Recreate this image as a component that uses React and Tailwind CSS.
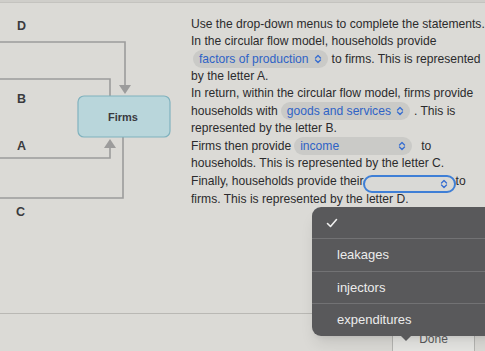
import React from 'react';

const Chevrons = ({ className = '' }) => (
  <svg width="8" height="10" viewBox="0 0 8 10" className={className} fill="none">
    <path d="M1.5 4 L4 1.5 L6.5 4" stroke="currentColor" strokeWidth="1.4" strokeLinecap="round" strokeLinejoin="round" />
    <path d="M1.5 6 L4 8.5 L6.5 6" stroke="currentColor" strokeWidth="1.4" strokeLinecap="round" strokeLinejoin="round" />
  </svg>
);

const Pill = ({ label, width = '', focused }) => (
  <span
    className={`inline-flex h-[18px] items-center justify-between gap-[5px] rounded-[9px] pl-[6px] pr-[6px] text-[#2f63c6] ${
      focused ? 'border-2 border-[#3f7fd6] bg-[#d9d9d6]' : 'bg-[#cacac7]'
    } ${width}`}
  >
    <span>{label}</span>
    <Chevrons className="text-[#3a6fd0]" />
  </span>
);

const Diagram = () => (
  <svg width="180" height="220" viewBox="0 0 180 220" className="shrink-0">
    <g stroke="#9c9c9c" strokeWidth="1.6" fill="none">
      <polyline points="0,39 125,39 125,84" />
      <polyline points="0,76 110,76 110,93" />
      <polyline points="0,155 110,155 110,144" />
      <polyline points="0,195 123,195 123,134" />
    </g>
    <polygon points="119,82 131,82 125,91" fill="#9c9c9c" />
    <polygon points="104,145 116,145 110,136" fill="#9c9c9c" />
    <rect x="78" y="93" width="92" height="41" rx="6" fill="#b9d6db" stroke="#80b2be" strokeWidth="1.2" />
    <g fontFamily="'Liberation Sans', Arial, sans-serif" fontWeight="700" fill="#3a3a3e">
      <text x="123" y="118" fontSize="11" textAnchor="middle">Firms</text>
      <text x="17" y="27" fontSize="12.5">D</text>
      <text x="17" y="100" fontSize="12.5">B</text>
      <text x="17" y="147" fontSize="12.5">A</text>
      <text x="16" y="213" fontSize="12.5">C</text>
    </g>
  </svg>
);

const Line = ({ children, h = 'h-[17px]', className = '' }) => (
  <div className={`flex items-center whitespace-nowrap ${h} ${className}`}>{children}</div>
);

export default function App() {
  return (
    <div className="relative h-[351px] w-[485px] overflow-hidden bg-[#dbdad6] font-['Liberation_Sans',Arial,sans-serif] text-[12.1px] text-[#2b2b2d]">
      <div className="h-[3px] border-b border-[#c4c3bf] bg-[#cfceca]" />
      <div className="flex h-[311px] border-b border-[#b9b8b4]">
        <Diagram />
        <div className="ml-[11px] flex flex-col pt-[13px]">
          <Line>Use the drop-down menus to complete the statements.</Line>
          <Line>In the circular flow model, households provide</Line>
          <Line h="h-[18px]">
            <span className="ml-[2px]">
              <Pill label="factors of production" />
            </span>
            <span className="ml-[4px]">to firms. This is represented</span>
          </Line>
          <Line>by the letter A.</Line>
          <Line>In return, within the circular flow model, firms provide</Line>
          <Line h="h-[18px]">
            <span>households with</span>
            <span className="ml-[3px]">
              <Pill label="goods and services" />
            </span>
            <span className="ml-[4px]">. This is</span>
          </Line>
          <Line>represented by the letter B.</Line>
          <Line h="h-[18px]">
            <span>Firms then provide</span>
            <span className="ml-[3px]">
              <Pill label="income" width="w-[118px]" />
            </span>
            <span className="ml-[9px]">to</span>
          </Line>
          <Line>households. This is represented by the letter C.</Line>
          <Line h="h-[19px]">
            <span>Finally, households provide their</span>
            <span className="-ml-[1px]">
              <Pill label="" width="w-[93px]" focused />
            </span>
            <span>to</span>
          </Line>
          <Line>firms. This is represented by the letter D.</Line>
        </div>
      </div>
      <div className="flex justify-end pr-[10px] pt-[11px]">
        <div className="flex h-[30px] w-[83px] justify-center rounded-[4px] border border-[#b5b5b2] bg-[#e6e6e3] pt-[4px] text-[12px] text-[#5a5a5c]">
          Done
        </div>
      </div>

      {/* popover menu */}
      <div className="absolute left-[312px] top-[207px] w-[190px] rounded-[9px] bg-[#59595b] text-[13px] text-[#ececec] shadow-lg">
        <div className="flex h-[32px] items-center border-b border-[#727274] pl-[14px]">
          <svg width="12" height="10" viewBox="0 0 12 10" fill="none">
            <path d="M1.5 5.5 L4.5 8.5 L10.5 1.5" stroke="#f0f0f0" strokeWidth="1.6" strokeLinecap="round" strokeLinejoin="round" />
          </svg>
        </div>
        <div className="flex h-[33px] items-center border-b border-[#727274] pl-[25px]">leakages</div>
        <div className="flex h-[32px] items-center border-b border-[#727274] pl-[25px]">injectors</div>
        <div className="flex h-[32px] items-center pl-[25px]">expenditures</div>
      </div>
      <div className="absolute left-[400px] top-[335px] h-0 w-0 border-x-[6px] border-t-[6px] border-x-transparent border-t-[#59595b]" />
    </div>
  );
}
